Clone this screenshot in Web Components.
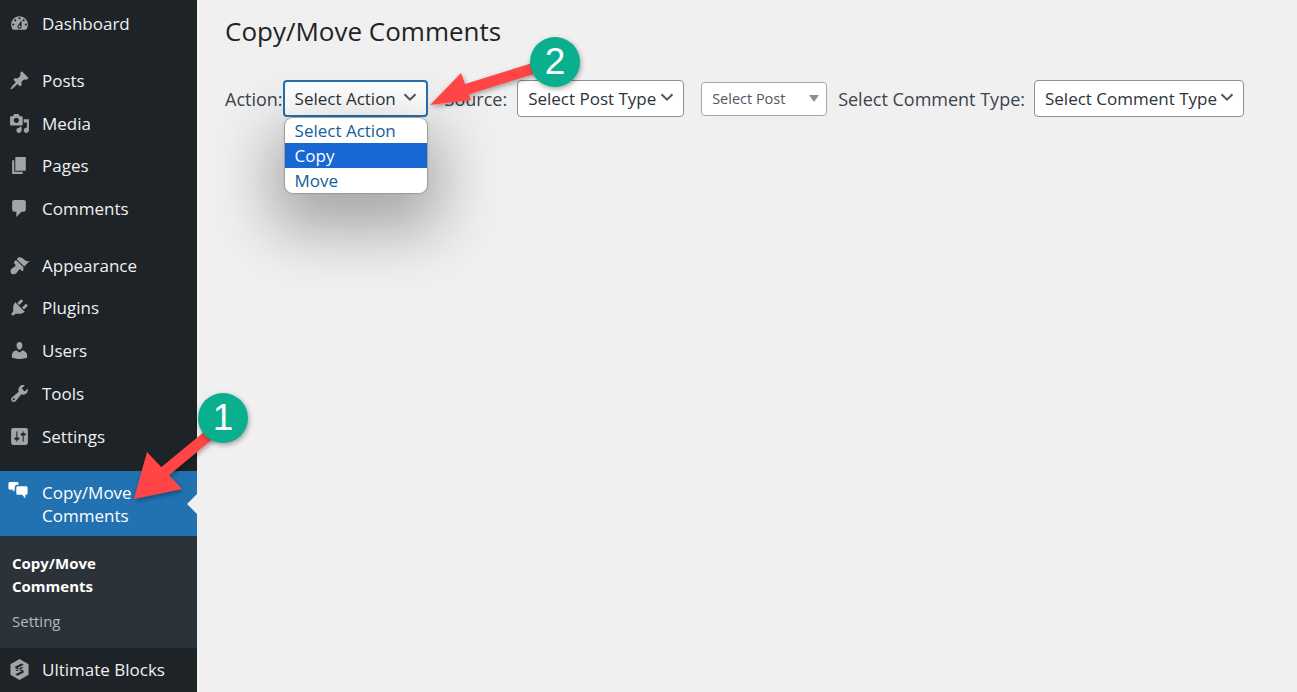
<!DOCTYPE html>
<html>
<head>
<meta charset="utf-8">
<title>Copy/Move Comments</title>
<style>
  html, body { margin: 0; height: 100%; background: #f0f0f1; overflow: hidden; }
  body { font-family: "Open Sans", "Liberation Sans", sans-serif; }
</style>
</head>
<body>
<admin-shell>
  <admin-sidebar slot="side">
    <menu-item icon="dashboard">Dashboard</menu-item>
    <menu-gap></menu-gap>
    <menu-item icon="post">Posts</menu-item>
    <menu-item icon="media">Media</menu-item>
    <menu-item icon="page">Pages</menu-item>
    <menu-item icon="comments">Comments</menu-item>
    <menu-gap></menu-gap>
    <menu-item icon="appearance">Appearance</menu-item>
    <menu-item icon="plugins">Plugins</menu-item>
    <menu-item icon="users">Users</menu-item>
    <menu-item icon="tools">Tools</menu-item>
    <menu-item icon="settings">Settings</menu-item>
    <menu-gap></menu-gap>
    <menu-item icon="copymove" current>Copy/Move<br>Comments</menu-item>
    <sub-menu>
      <sub-item current>Copy/Move<br>Comments</sub-item>
      <sub-item>Setting</sub-item>
    </sub-menu>
    <menu-item icon="ublocks">Ultimate Blocks</menu-item>
  </admin-sidebar>
  <copy-page>
    <form-row>
      <form-label>Action:</form-label>
      <fake-select focused open label="Select Action" options="Select Action|Copy|Move" active="1" w="145"></fake-select>
      <form-label style="margin-left:17px">Source:</form-label>
      <fake-select label="Select Post Type" w="167" style="margin-left:10px"></fake-select>
      <fake-select small label="Select Post" w="126" style="margin-left:17px"></fake-select>
      <form-label style="margin-left:11px">Select Comment Type:</form-label>
      <fake-select label="Select Comment Type" w="210" style="margin-left:9px"></fake-select>
    </form-row>
  </copy-page>
  <call-out n="1" slot="over" style="left:0;top:0"></call-out>
  <call-out n="2" slot="over" style="left:0;top:0"></call-out>
</admin-shell>

<script>
const ICONS = {
  dashboard: '<path d="M3.76 16h12.48c1.1-1.37 1.76-3.11 1.76-5 0-4.42-3.58-8-8-8s-8 3.58-8 8c0 1.89.66 3.63 1.76 5zM10 4c.55 0 1 .45 1 1s-.45 1-1 1-1-.45-1-1 .45-1 1-1zM6 6c.55 0 1 .45 1 1s-.45 1-1 1-1-.45-1-1 .45-1 1-1zm8 0c.55 0 1 .45 1 1s-.45 1-1 1-1-.45-1-1 .45-1 1-1zm-5.37 5.55L12 7v6c0 1.1-.9 2-2 2s-2-.9-2-2c0-.57.24-1.08.63-1.45zM4 10c.55 0 1 .45 1 1s-.45 1-1 1-1-.45-1-1 .45-1 1-1zm12 0c.55 0 1 .45 1 1s-.45 1-1 1-1-.45-1-1 .45-1 1-1zm-5 3c0-.55-.45-1-1-1s-1 .45-1 1 .45 1 1 1 1-.45 1-1z" fill-rule="evenodd"/>',
  post: '<path d="M10.44 3.02l1.82-1.82 6.36 6.35-1.83 1.82c-1.05-.68-2.48-.57-3.41.36l-.75.75c-.92.93-1.04 2.35-.35 3.41l-1.83 1.82-2.41-2.41-2.8 2.79c-.42.42-3.38 2.71-3.8 2.29s1.86-3.39 2.28-3.81l2.79-2.79L4.1 9.36l1.83-1.82c1.05.69 2.48.57 3.4-.36l.75-.75c.93-.92 1.05-2.35.36-3.41z"/>',
  media: '<path fill-rule="evenodd" d="M13 11V4c0-.55-.45-1-1-1h-1.67L9 1H5L3.67 3H2c-.55 0-1 .45-1 1v7c0 .55.45 1 1 1h10c.55 0 1-.45 1-1zM7 4.5c1.38 0 2.5 1.12 2.5 2.5S8.38 9.5 7 9.5 4.5 8.38 4.5 7 5.62 4.5 7 4.5zM14 6h5v10.5c0 1.38-1.12 2.5-2.5 2.5S14 17.88 14 16.5s1.12-2.5 2.5-2.5c.17 0 .34.02.5.05V9h-3V6zm-4 8.05V13h2v3.5c0 1.38-1.12 2.5-2.5 2.5S7 17.88 7 16.5 8.12 14 9.5 14c.17 0 .34.02.5.05z"/>',
  page: '<path d="M6 15V2h10v13H6zm-1 1h8v2H3V5h2v11z"/>',
  comments: '<path d="M5 2h9c1.1 0 2 .9 2 2v7c0 1.1-.9 2-2 2h-2l-5 5v-5H5c-1.1 0-2-.9-2-2V4c0-1.1.9-2 2-2z"/>',
  appearance: '<path d="M14.48 11.06L7.41 3.99l1.5-1.5c.5-.56 2.3-.47 3.51.32 1.21.8 1.43 1.28 2.91 2.1 1.18.64 2.45 1.26 4.45.85zm-.71.71L6.7 4.7 4.93 6.47c-.39.39-.39 1.02 0 1.41l1.06 1.06c.39.39.39 1.03 0 1.42-.6.6-1.43 1.11-2.21 1.69-.35.26-.7.53-1.01.84C1.43 13.23.99 15.7 2.1 17.9c1.4.7 3.7.77 5.03-.74.31-.31.58-.66.85-1.01.58-.78 1.09-1.61 1.69-2.21.39-.39 1.02-.39 1.41 0l1.06 1.06c.39.39 1.02.39 1.41 0z"/>',
  plugins: '<path d="M13.11 4.36L9.87 7.6 8 5.73l3.24-3.24c.35-.34 1.05-.2 1.56.32.52.51.66 1.21.31 1.55zm-8 1.77l.91-1.12 9.01 9.01-1.19.84c-.71.71-2.63 1.16-3.82 1.16H6.14L4.9 17.26c-.59.59-1.54.59-2.12 0-.59-.58-.59-1.53 0-2.12l1.24-1.24v-3.88c0-1.13.4-3.19 1.09-3.89zm7.26 3.97l3.24-3.24c.34-.35 1.04-.21 1.55.31.52.51.66 1.21.31 1.55l-3.24 3.25z"/>',
  users: '<path d="M10 9.25c-2.27 0-2.73-3.44-2.73-3.44C7 4.02 7.82 2 9.97 2c2.16 0 2.98 2.02 2.71 3.81 0 0-.41 3.44-2.68 3.44zm0 2.57L12.72 10c2.39 0 4.52 2.33 4.52 4.53v2.49s-3.65 1.13-7.24 1.13c-3.65 0-7.24-1.13-7.24-1.13v-2.49c0-2.25 1.94-4.48 4.47-4.48z"/>',
  tools: '<path fill-rule="evenodd" d="M16.68 9.77c-1.34 1.34-3.3 1.67-4.95.99l-5.41 6.52c-.99.99-2.59.99-3.58 0s-.99-2.59 0-3.57l6.52-5.42c-.68-1.65-.35-3.61.99-4.95 1.28-1.28 3.12-1.62 4.72-1.06l-2.89 2.89 2.82 2.82 2.86-2.87c.53 1.58.18 3.39-1.08 4.65zM3.81 16.21c.4.39 1.04.39 1.43 0 .4-.4.4-1.04 0-1.43-.39-.4-1.03-.4-1.43 0-.39.39-.39 1.03 0 1.43z"/>',
  settings: '<path fill-rule="evenodd" d="M18 16V4c0-1.1-.9-2-2-2H4c-1.1 0-2 .9-2 2v12c0 1.1.9 2 2 2h12c1.1 0 2-.9 2-2zM8 11h1c.55 0 1 .45 1 1s-.45 1-1 1H8v1.5c0 .28-.22.5-.5.5s-.5-.22-.5-.5V13H6c-.55 0-1-.45-1-1s.45-1 1-1h1V5.5c0-.28.22-.5.5-.5s.5.22.5.5V11zm5-2h-1c-.55 0-1-.45-1-1s.45-1 1-1h1V5.5c0-.28.22-.5.5-.5s.5.22.5.5V7h1c.55 0 1 .45 1 1s-.45 1-1 1h-1v5.5c0 .28-.22.5-.5.5s-.5-.22-.5-.5V9z"/>',
  copymove: '<path fill="#fff" d="M2 1h6.5c1 0 1.6.6 1.6 1.6v.9H9.2c-1.7 0-2.8 1-2.8 2.7v2.6l-1.4 1.6V8.3H2C1 8.3.4 7.7.4 6.7V2.6C.4 1.6 1 1 2 1z"/><path fill="#fff" d="M9.5 5h7.6c1 0 1.6.6 1.6 1.6v5c0 1-.6 1.6-1.6 1.6h-.6v3.4l-3-3.4H9.5c-1 0-1.6-.6-1.6-1.6v-5C7.9 5.6 8.5 5 9.5 5z"/>',
  ublocks: '<path fill-rule="evenodd" d="M10 0l8.6 5v10L10 20l-8.6-5V5zM6 7.2l6-3 2 1.3-6 3 6 2.8v1.6l-6 3-2-1.3 6-3-6-2.8z M6.2 10.6l1.6.8 6-3-1.6-.8z"/>'
};

function define(name, css, html, extra) {
  customElements.define(name, class extends HTMLElement {
    constructor() {
      super();
      this.attachShadow({ mode: 'open' });
      this.shadowRoot.innerHTML = '<style>' + css + '</style>' + html;
    }
    connectedCallback() { if (extra) extra.call(this); }
  });
}

define('admin-shell', `
  :host { display: flex; position: relative; width: 1297px; height: 692px; overflow: hidden; }
`, `<slot name="side"></slot><slot></slot><slot name="over"></slot>`);

define('admin-sidebar', `
  :host { display: flex; flex-direction: column; flex: none; width: 197px; height: 692px; background: #1d2327; }
  .pad { height: 2.6px; flex: none; }
`, `<div class="pad"></div><slot></slot>`);

define('menu-gap', `:host { display: block; height: 13.6px; flex: none; }`, ``);

define('menu-item', `
  :host { display: flex; align-items: center; position: relative; flex: none; min-height: 42.8px; box-sizing: border-box;
    color: #f0f0f1; font-size: 17px; line-height: 23px; }
  :host([current]) { background: #2271b1; color: #fff; min-height: 65px; align-items: flex-start; padding-top: 10px; }
  svg { width: 21px; height: 21px; margin-left: 9px; margin-right: 12px; flex: none; fill: #a0a5aa; }
  :host([current]) svg { margin-left: 8px; margin-right: 13px; margin-top: 0; }
  .notch { display: none; position: absolute; right: 0; top: 23px; border: 10px solid transparent; border-right-color: #f0f0f1; border-left-width: 0; }
  :host([current]) .notch { display: block; }
`, `<svg viewBox="0 0 20 20"></svg><span><slot></slot></span><i class="notch"></i>`, function () {
  this.shadowRoot.querySelector('svg').innerHTML = ICONS[this.getAttribute('icon')] || '';
});

define('sub-menu', `
  :host { display: block; flex: none; background: #2c3338; height: 112px; box-sizing: border-box; padding-top: 16px; }
`, `<slot></slot>`);

define('sub-item', `
  :host { display: block; padding: 0 12px 12px; color: #b4b9be; font-size: 15px; line-height: 23px; }
  :host([current]) { color: #fff; font-weight: 700; }
`, `<slot></slot>`);

define('copy-page', `
  :host { display: block; flex: 1; min-width: 0; padding: 0 0 0 28px; color: #1d2327; }
  h1 { margin: 0; padding-top: 12px; font-size: 26px; font-weight: 400; line-height: 38px; height: 78px; box-sizing: border-box; color: #1d2327; }
`, `<h1>Copy/Move Comments</h1><slot></slot>`);

define('form-row', `
  :host { display: flex; align-items: center; height: 41px; }
`, `<slot></slot>`);

define('form-label', `
  :host { display: block; flex: none; color: #3c434a; font-size: 18px; line-height: 26px; padding-top: 1px; white-space: nowrap; }
`, `<slot></slot>`);

define('fake-select', `
  :host { display: block; position: relative; flex: none; box-sizing: border-box; height: 37px; background: #fff; border: 1px solid #8c8f94; border-radius: 4px;
    color: #2c3338; font-size: 17px; line-height: 35px; }
  :host([focused]) { border: 2px solid #2271b1; color: #2c3338; }
  :host([small]) { height: 34px; border-color: #a7aaad; color: #50575e; font-size: 14.5px; line-height: 32px; }
  .val { position: absolute; left: 10px; top: 0; white-space: nowrap; }
  :host([focused]) .val { top: -1px; left: 10px; }
  .chev { position: absolute; right: 9px; top: 11px; width: 14px; height: 10px; }
  :host([focused]) .chev { right: 9px; top: 10px; }
  .tri { display: none; position: absolute; right: 7px; top: 12px; border: 5px solid transparent; border-top: 7px solid #8c8f94; border-bottom: 0; }
  :host([small]) .chev { display: none; }
  :host([small]) .tri { display: block; }
  .list { display: none; position: absolute; left: 0; top: 36px; width: 142px; box-sizing: border-box; background: #fff; border-radius: 8px; overflow: hidden;
    box-shadow: 0 0 1px 1px #9a9a9a; color: #135e96; line-height: 25px; z-index: 2; }
  :host([open]) .list { display: block; }
  .shade { display: none; position: absolute; left: 0; top: 36px; width: 142px; height: 75px; border-radius: 8px; box-shadow: 0 24px 60px 14px rgba(0,0,0,.3); }
  :host([open]) .shade { display: block; }
  .list div { padding-left: 10px; height: 25px; }
  .list div.on { background: #1967d2; color: #fff; }
`, `<span class="val"></span>
  <svg class="chev" viewBox="0 0 14 10"><path d="M1.5 2.2L7 7.6l5.5-5.4" fill="none" stroke="#50575e" stroke-width="2"/></svg>
  <i class="tri"></i>
  <div class="shade"></div><div class="list"></div>`, function () {
  const root = this.shadowRoot;
  root.querySelector('.val').textContent = this.getAttribute('label');
  this.style.width = this.getAttribute('w') + 'px';
  const opts = this.getAttribute('options');
  if (opts) {
    const active = +this.getAttribute('active');
    root.querySelector('.list').innerHTML = opts.split('|').map((o, i) =>
      '<div' + (i === active ? ' class="on"' : '') + '>' + o + '</div>').join('');
  }
});

// numbered red arrows from the tutorial, they sit on top of the screen
const CALLOUTS = {
  1: { cx: 223, cy: 418, shaft: 'M215 430L152 482', head: '134,499 147,452 182,489' },
  2: { cx: 555, cy: 62, shaft: 'M538 67L458 92', head: '430,105 461,73 471,100' }
};
define('call-out', `
  :host { display: block; position: absolute; width: 1297px; height: 692px; pointer-events: none; }
  svg { position: absolute; left: 0; top: 0; }
  .num { position: absolute; width: 50px; height: 50px; border-radius: 50%; background: #0aaf8d; color: #fff; text-align: center;
    font-family: "Liberation Sans", Arial, sans-serif; font-size: 37px; line-height: 50px; box-shadow: 1px 2px 5px rgba(0,0,0,.35); }
`, `<svg width="1297" height="692"><defs><filter id="s" x="-30%" y="-30%" width="160%" height="160%"><feDropShadow dx="1" dy="2" stdDeviation="2.5" flood-opacity=".35"/></filter></defs>
  <g filter="url(#s)"><path class="shaft" fill="none" stroke="#ff4545" stroke-width="11"/><polygon class="head" fill="#ff4545"/></g></svg><div class="num"></div>`, function () {
  const c = CALLOUTS[this.getAttribute('n')];
  const r = this.shadowRoot;
  r.querySelector('.shaft').setAttribute('d', c.shaft);
  r.querySelector('.head').setAttribute('points', c.head);
  const num = r.querySelector('.num');
  num.textContent = this.getAttribute('n');
  num.style.left = (c.cx - 25) + 'px';
  num.style.top = (c.cy - 25) + 'px';
});
</script>
</body>
</html>
